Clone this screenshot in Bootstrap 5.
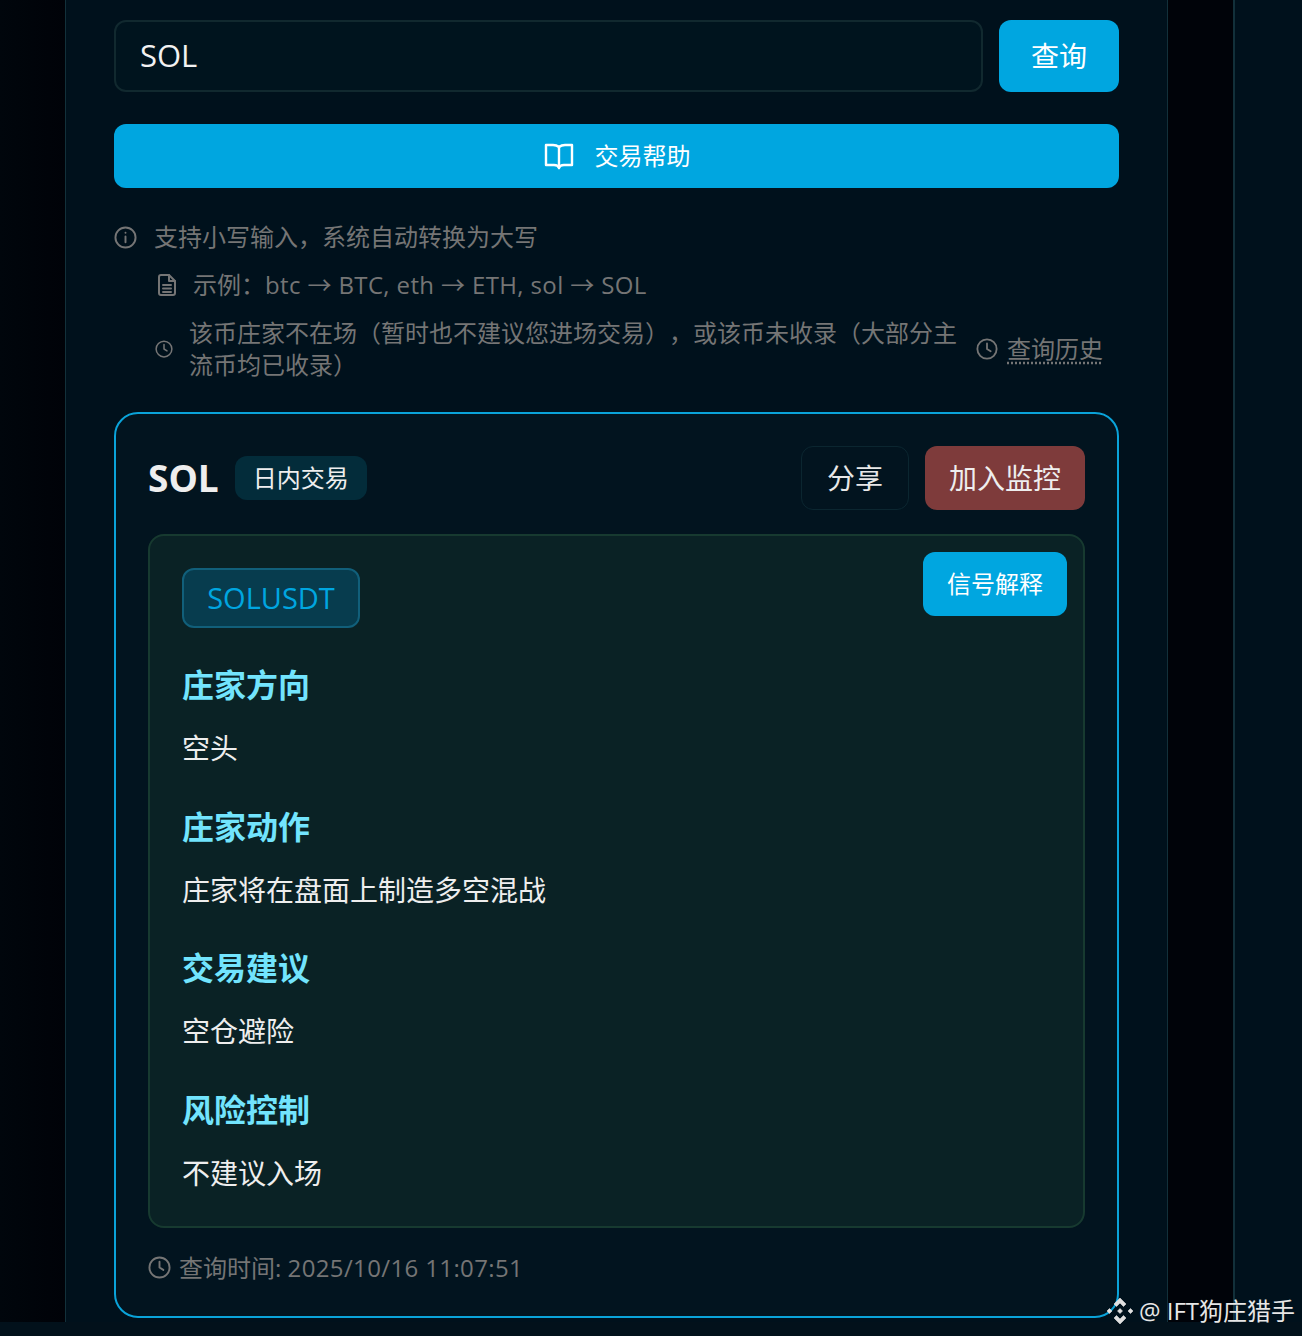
<!doctype html>
<html lang="zh-CN">
<head>
<meta charset="utf-8">
<title>SOL 查询</title>
<link href="https://cdn.jsdelivr.net/npm/bootstrap@5.3.0/dist/css/bootstrap.min.css" rel="stylesheet">
<style>
html,body{height:1336px;overflow:hidden}
body{background:#02111b;font-family:"Open Sans","Noto Sans CJK SC",sans-serif;color:#e8e8e8;position:relative;text-spacing-trim:space-all}
.sx-shell{height:1322px}
.sx-gutter{width:65px;flex:none;background:linear-gradient(90deg,#00060c,#000208)}
.sx-gutter-b{width:65px;flex:none;background:#000309}
.sx-main{width:1103px;flex:none;background:#00111c;border-left:1px solid #12303a;border-right:1px solid #12303a;padding:20px 48px 0 48px}
.sx-side{flex:1;background:#00111c;border-left:2px solid #12303a}
.sx-input.form-control{height:72px;flex:1;background:#00141e;border:2px solid #11292f;border-radius:12px;color:#f2f2f2;font-size:31px;padding:0 24px 2px;box-shadow:none}
.sx-btn.btn{background:#00a6e0;border:0;color:#fff;border-radius:12px;font-size:24px;font-weight:400;padding:0}
.sx-query.btn{width:120px;height:72px;font-size:28px}
.sx-help.btn{height:64px;margin-top:32px;gap:20px}
.sx-hints{margin-top:33px;color:#757575;font-size:24px;line-height:32px}
.sx-hints svg,.sx-time svg{flex:none;fill:none;stroke:currentColor;stroke-width:2;stroke-linecap:round;stroke-linejoin:round}
.sx-line{margin-bottom:16px}
.sx-i1{margin-right:17px}
.sx-indent{padding-left:43px}
.sx-indent svg{margin-right:16px}
.sx-row3{padding-left:41px;padding-right:16px}
.sx-row3 svg{margin-right:16px}
.sx-note{flex:1}
.sx-hist{white-space:nowrap}
.sx-hist svg{margin-right:9px}
.sx-hist span{text-decoration:underline dotted;text-underline-offset:4px}
.sx-latin{letter-spacing:.37px}
.sx-card{margin-top:31px;border:2px solid #0aa3d9;border-radius:24px;padding:32px;background-color:#02141f;background-image:radial-gradient(#082531 .6px,transparent .7px);background-size:4px 4px}
.sx-sym{font-size:37px;font-weight:700;line-height:44px;color:#eee;margin-right:16px}
.sx-type{background:#032c3a;border-radius:12px;height:44px;width:132px;font-size:24px;color:#eee}
.sx-share.btn{width:108px;height:64px;border:1px solid #0b2630;border-radius:12px;color:#e8e8e8;font-size:28px;padding:0;background:transparent}
.sx-add.btn{width:160px;height:64px;background:#7e3b3b;border:0;border-radius:12px;color:#eee;font-size:28px;padding:0}
.sx-inner{position:relative;margin-top:24px;background:#0a2225;border:2px solid #173a30;border-radius:16px;padding:32px}
.sx-signal.btn{position:absolute;top:16px;right:16px;width:144px;height:64px}
.sx-tag{width:178px;height:60px;background:#073c4e;border:2px solid #115f7a;border-radius:12px;color:#00a6e0;font-size:29px;margin-bottom:38px}
.sx-h{font-size:32px;font-weight:700;line-height:38.4px;color:#72e4fd;margin:0 0 23px}
.sx-v{font-size:28px;line-height:42px;color:#eee;margin:0 0 38.1px}
.sx-v:last-child{margin-bottom:0}
.sx-time{margin-top:24px;font-size:24px;line-height:32px;color:#757575;gap:8px}
.sx-mark{position:absolute;right:7px;bottom:9px;font-size:24px;line-height:32px;color:#e6e6e6;gap:5px;white-space:nowrap}
.sx-mark svg{fill:#e0e0e0;stroke:#e0e0e0;stroke-width:.6}
</style>
</head>
<body>
<div class="sx-shell d-flex">
  <div class="sx-gutter"></div>
  <main class="sx-main">
    <div class="d-flex gap-3">
      <input class="form-control sx-input" value="SOL" aria-label="symbol">
      <button class="btn sx-btn sx-query">查询</button>
    </div>
    <button class="btn sx-btn sx-help w-100 d-flex align-items-center justify-content-center">
      <svg width="32" height="32" viewBox="0 0 32 32" fill="none" stroke="#fff" stroke-width="2.4" stroke-linejoin="round" stroke-linecap="round"><path d="M16 7c-2-1.6-4-2-6-2H3v20h8c2.6 0 4.4.8 5 3 .6-2.200 2.400-3 5-3h8V5h-7c-2 0-4 .4-6 2z"/><path d="M16 7v21"/></svg>
      <span>交易帮助</span>
    </button>
    <div class="sx-hints">
      <div class="sx-line d-flex align-items-center">
        <svg class="sx-i1" width="23" height="23" viewBox="0 0 24 24"><circle cx="12" cy="12" r="10.500"/><path d="M12 11v6M12 7h.01"/></svg>
        <span>支持小写输入，系统自动转换为大写</span>
      </div>
      <div class="sx-line sx-indent d-flex align-items-center">
        <svg width="20" height="22" viewBox="0 0 20 22"><path d="M2 3a2 2 0 0 1 2-2h8l6 6v12a2 2 0 0 1-2 2H4a2 2 0 0 1-2-2z"/><path d="M12 1v6h6M6 11h8M6 14.500h8M6 18h8"/></svg>
        <span>示例：<span class="sx-latin">btc → BTC, eth → ETH, sol → SOL</span></span>
      </div>
      <div class="sx-row3 d-flex align-items-center">
        <svg width="18" height="18" viewBox="0 0 24 24"><circle cx="12" cy="12" r="10.500"/><path d="M12 6v6l4 2.500"/></svg>
        <span class="sx-note">该币庄家不在场（暂时也不建议您进场交易），或该币未收录（大部分主流币均已收录）</span>
        <span class="sx-hist d-flex align-items-center">
          <svg width="22" height="22" viewBox="0 0 24 24"><circle cx="12" cy="12" r="10.500"/><path d="M12 6v6l4 2.500"/></svg>
          <span>查询历史</span>
        </span>
      </div>
    </div>
    <section class="sx-card">
      <div class="d-flex align-items-center justify-content-between">
        <div class="d-flex align-items-center">
          <span class="sx-sym">SOL</span>
          <span class="sx-type d-flex align-items-center justify-content-center">日内交易</span>
        </div>
        <div class="d-flex gap-3">
          <button class="btn sx-share">分享</button>
          <button class="btn sx-add">加入监控</button>
        </div>
      </div>
      <div class="sx-inner">
        <button class="btn sx-btn sx-signal">信号解释</button>
        <div class="sx-tag d-flex align-items-center justify-content-center">SOLUSDT</div>
        <h3 class="sx-h">庄家方向</h3>
        <p class="sx-v">空头</p>
        <h3 class="sx-h">庄家动作</h3>
        <p class="sx-v">庄家将在盘面上制造多空混战</p>
        <h3 class="sx-h">交易建议</h3>
        <p class="sx-v">空仓避险</p>
        <h3 class="sx-h">风险控制</h3>
        <p class="sx-v">不建议入场</p>
      </div>
      <div class="sx-time d-flex align-items-center">
        <svg width="23" height="23" viewBox="0 0 24 24"><circle cx="12" cy="12" r="10.500"/><path d="M12 6v6l4 2.500"/></svg>
        <span>查询时间: <span class="sx-latin">2025/10/16 11:07:51</span></span>
      </div>
    </section>
  </main>
  <div class="sx-gutter-b"></div>
  <div class="sx-side"></div>
</div>
<div class="sx-mark d-flex align-items-center">
  <svg width="28" height="28" viewBox="0 0 28 28"><path d="M14 1l6 6-2.500 2.500L14 6l-3.500 3.500L8 7zM3.500 11.500L6 14l-2.500 2.500L1 14zM24.500 11.500L27 14l-2.500 2.500L22 14zM14 11.500l2.500 2.500-2.500 2.500-2.500-2.500zM14 27l-6-6 2.500-2.500L14 22l3.500-3.500L20 21z"/></svg>
  <span>@ IFT狗庄猎手</span>
</div>
</body>
</html>
